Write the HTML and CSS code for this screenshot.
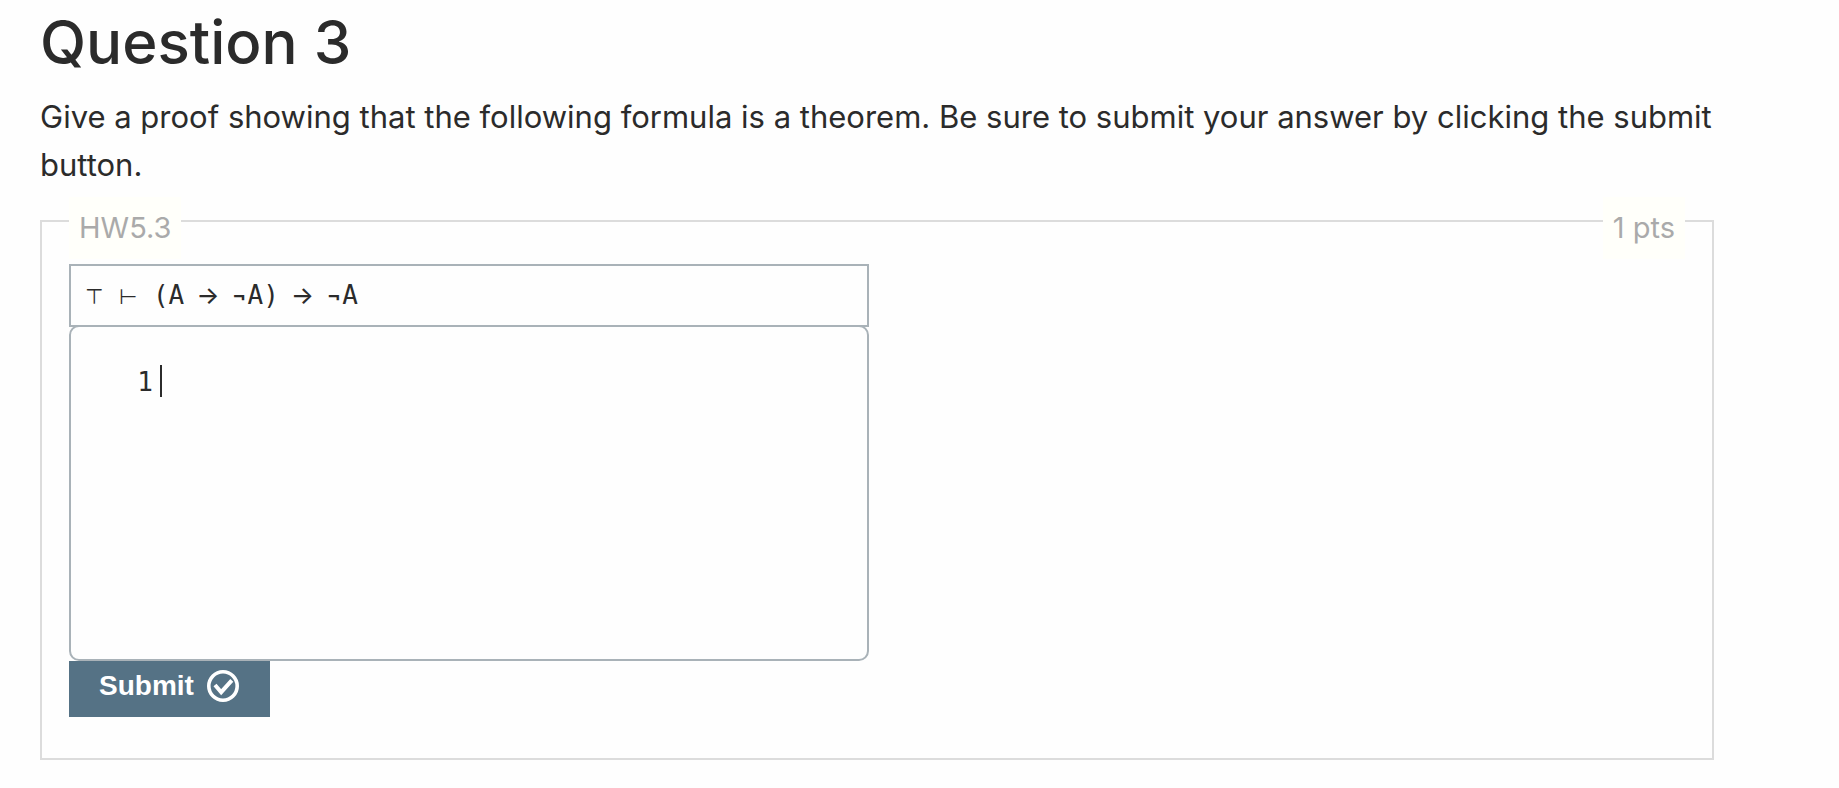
FILE: index.html
```html
<!DOCTYPE html>
<html lang="en">
<head>
<meta charset="UTF-8">
<title>Question 3</title>
<link rel="stylesheet" href="styles.css">
</head>
<body>
  <main class="content">
    <h1>Question 3</h1>
    <p class="instructions">Give a proof showing that the following formula is a theorem. Be sure to submit your answer by clicking the submit button.</p>

    <form class="exercise">
      <!-- labels sit over the top border -->
      <div class="labels">
        <label class="tag" for="proof">HW5.3</label>
        <span class="tag">1 pts</span>
      </div>

      <div class="goal"><span class="tack">⊤</span> <span class="tack">⊢</span> (A <span class="op">→</span> <span class="op">¬</span>A) <span class="op">→</span> <span class="op">¬</span>A</div>
      <div class="editor">
        <span class="line-number">1</span>
        <span class="cursor"></span>
        <textarea id="proof" class="proof" spellcheck="false"></textarea>
      </div>

      <button type="button" class="submit">
        Submit
        <svg class="check" viewBox="0 0 32 32" aria-hidden="true">
          <circle cx="16" cy="16" r="14.2"/>
          <path d="M8 15 L14.2 22.2 L24.8 10.4" stroke-width="4"/>
        </svg>
      </button>
    </form>
  </main>
</body>
</html>
```

FILE: styles.css
```css
body{
  margin:0;
  background:#fefefe;
  color:#2b2b2b;
  font-family:Inter,"Liberation Sans",sans-serif;
  font-size:31px;
  line-height:48px;
}
.content{padding:4px 125px 28px 40px;}
h1{margin:0;font-size:60px;font-weight:500;line-height:76px;}
.instructions{margin:13px 0 31px;}

.exercise{
  position:relative;
  border:2px solid #dcdcdc;
  padding:42px 27px 41px;
}
.labels{
  position:absolute;
  top:-25px;left:27px;right:27px;
  display:flex;
  justify-content:space-between;
}
.tag{
  padding:7px 10px;
  background:#fffffa;
  color:#aaa;
  font-size:29px;
}

.goal,.editor{
  box-sizing:border-box;
  max-width:800px;
  border:2px solid #a9b2b8;
  font-family:"DejaVu Sans Mono",monospace;
  font-size:26px;
}
.goal{height:63px;padding:0 14px;line-height:59px;}
/* logic symbols */
.tack{font-family:"DejaVu Sans",sans-serif;font-size:21px;}
.op{
  display:inline-flex;
  justify-content:center;
  width:16px;
  font-family:Inter,sans-serif;
  font-size:24px;
  font-weight:500;
  line-height:24px;
}
.editor{
  display:flex;
  height:336px;
  margin-top:-2px;
  border-radius:10px;
  padding:33px 14px;
}
.line-number{width:68px;text-align:right;line-height:44px;}
.cursor{width:2px;height:32px;margin:5px 0 0 7px;background:#2b2b2b;}
.proof{
  flex:1;
  border:0;
  padding:0 4px;
  background:none;
  outline:none;
  resize:none;
  color:inherit;
  font:inherit;
  line-height:44px;
}

.submit{
  display:flex;
  align-items:center;
  gap:13px;
  height:56px;
  border:0;
  padding:0 31px 6px 30px;
  background:#557285;
  color:#fff;
  font-family:"Liberation Sans",sans-serif;
  font-size:28px;
  font-weight:bold;
}
.check{
  width:32px;height:32px;
  fill:none;
  stroke:#fff;
  stroke-width:3.6;
}
```
